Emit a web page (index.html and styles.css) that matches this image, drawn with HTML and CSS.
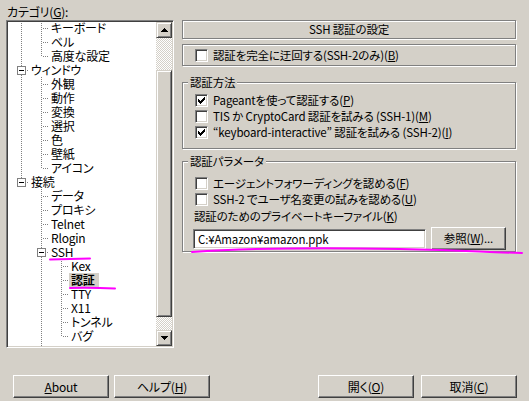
FILE: index.html
```html
<!DOCTYPE html>
<html lang="ja">
<head>
<meta charset="utf-8">
<title>PuTTY 設定</title>
<link rel="stylesheet" href="styles.css">
</head>
<body>
<div class="dialog">
  <div class="main">
    <div class="left">
      <div class="cat-label">カテゴリ(<u>G</u>):</div>
      <div class="tree">
        <div class="tree-list">
          <div class="rows">
            <div class="row"><span class="g pipe"></span><span class="g tee"></span><span class="lbl">キーボード</span></div>
            <div class="row"><span class="g pipe"></span><span class="g tee"></span><span class="lbl">ベル</span></div>
            <div class="row"><span class="g pipe"></span><span class="g elbow"></span><span class="lbl">高度な設定</span></div>
            <div class="row"><span class="g tee"><span class="exp"></span></span><span class="lbl">ウィンドウ</span></div>
            <div class="row"><span class="g pipe"></span><span class="g tee"></span><span class="lbl">外観</span></div>
            <div class="row"><span class="g pipe"></span><span class="g tee"></span><span class="lbl">動作</span></div>
            <div class="row"><span class="g pipe"></span><span class="g tee"></span><span class="lbl">変換</span></div>
            <div class="row"><span class="g pipe"></span><span class="g tee"></span><span class="lbl">選択</span></div>
            <div class="row"><span class="g pipe"></span><span class="g tee"></span><span class="lbl">色</span></div>
            <div class="row"><span class="g pipe"></span><span class="g tee"></span><span class="lbl">壁紙</span></div>
            <div class="row"><span class="g pipe"></span><span class="g elbow"></span><span class="lbl">アイコン</span></div>
            <div class="row"><span class="g elbow"><span class="exp"></span></span><span class="lbl">接続</span></div>
            <div class="row"><span class="g"></span><span class="g tee"></span><span class="lbl">データ</span></div>
            <div class="row"><span class="g"></span><span class="g tee"></span><span class="lbl">プロキシ</span></div>
            <div class="row"><span class="g"></span><span class="g tee"></span><span class="lbl">Telnet</span></div>
            <div class="row"><span class="g"></span><span class="g tee"></span><span class="lbl">Rlogin</span></div>
            <div class="row"><span class="g"></span><span class="g tee"><span class="exp"></span></span><span class="lbl">SSH</span></div>
            <div class="row"><span class="g"></span><span class="g pipe"></span><span class="g tee"></span><span class="lbl">Kex</span></div>
            <div class="row"><span class="g"></span><span class="g pipe"></span><span class="g tee"></span><span class="lbl sel">認証</span></div>
            <div class="row"><span class="g"></span><span class="g pipe"></span><span class="g tee"></span><span class="lbl">TTY</span></div>
            <div class="row"><span class="g"></span><span class="g pipe"></span><span class="g tee"></span><span class="lbl">X11</span></div>
            <div class="row"><span class="g"></span><span class="g pipe"></span><span class="g tee"></span><span class="lbl">トンネル</span></div>
            <div class="row"><span class="g"></span><span class="g pipe"></span><span class="g elbow"></span><span class="lbl">バグ</span></div>
            <div class="row"><span class="g"></span><span class="g tee"></span></div>
          </div>
        </div>
        <div class="vscroll">
          <div class="sb-btn"><svg width="7" height="4" viewBox="0 0 7 4" shape-rendering="crispEdges"><path d="M3 0h1v1H3zM2 1h3v1H2zM1 2h5v1H1zM0 3h7v1H0z" fill="#000"/></svg></div>
          <div class="track track-top"></div>
          <div class="thumb"></div>
          <div class="track track-bottom"></div>
          <div class="sb-btn"><svg width="7" height="4" viewBox="0 0 7 4" shape-rendering="crispEdges"><path d="M0 0h7v1H0zM1 1h5v1H1zM2 2h3v1H2zM3 3h1v1H3z" fill="#000"/></svg></div>
        </div>
      </div>
    </div>

    <div class="right">
      <div class="etched title">SSH 認証の設定</div>
      <div class="etched bypass">
        <div class="cb-row"><span class="cb"></span><span>認証を完全に迂回する(SSH-2のみ)(<u>B</u>)</span></div>
      </div>
      <div class="etched group g1">
        <div class="group-title">認証方法</div>
        <div class="group-body">
          <div class="cb-row"><span class="cb"><svg width="11" height="11" viewBox="1 1 11 11" shape-rendering="crispEdges"><path d="M3 5h1v3H3zM4 6h1v3H4zM5 7h1v3H5zM6 6h1v3H6zM7 5h1v3H7zM8 4h1v3H8zM9 3h1v3H9z" fill="#000"/></svg></span><span>Pageantを使って認証する(<u>P</u>)</span></div>
          <div class="cb-row"><span class="cb"></span><span>TIS か CryptoCard 認証を試みる (SSH-1)(<u>M</u>)</span></div>
          <div class="cb-row"><span class="cb"><svg width="11" height="11" viewBox="1 1 11 11" shape-rendering="crispEdges"><path d="M3 5h1v3H3zM4 6h1v3H4zM5 7h1v3H5zM6 6h1v3H6zM7 5h1v3H7zM8 4h1v3H8zM9 3h1v3H9z" fill="#000"/></svg></span><span>“keyboard-interactive” 認証を試みる (SSH-2)(<u>I</u>)</span></div>
        </div>
      </div>
      <div class="etched group g2">
        <div class="group-title">認証パラメータ</div>
        <div class="group-body">
          <div class="cb-row"><span class="cb"></span><span>エージェントフォワーディングを認める(<u>F</u>)</span></div>
          <div class="cb-row"><span class="cb"></span><span>SSH-2 でユーザ名変更の試みを認める(<u>U</u>)</span></div>
          <div class="file-label">認証のためのプライベートキーファイル(<u>K</u>)</div>
          <div class="file-row">
            <input class="textbox" type="text" value="C:¥Amazon¥amazon.ppk" readonly>
            <button class="btn browse" type="button">参照(<u>W</u>)...</button>
          </div>
        </div>
      </div>
    </div>
  </div>

  <div class="buttons">
    <button class="btn wide" type="button"><u>A</u>bout</button>
    <button class="btn wide help" type="button">ヘルプ(<u>H</u>)</button>
    <button class="btn wide open" type="button">開く(<u>O</u>)</button>
    <button class="btn wide cancel" type="button">取消(<u>C</u>)</button>
  </div>
</div>

<svg class="marks" width="529" height="401" viewBox="0 0 529 401">
  <g fill="none" stroke="#ff00ff" stroke-width="2" stroke-linecap="round">
    <path d="M50 259.5 Q70 259 90 258.5"/>
    <path d="M70 288 Q92 287.5 115 288.5"/>
    <path d="M192 252 C250 248 330 247.5 400 249 S480 252 522 253"/>
  </g>
</svg>
</body>
</html>
```

FILE: styles.css
```css
html, body {
  margin: 0;
  padding: 0;
}

body {
  width: 529px;
  height: 401px;
  overflow: hidden;
  position: relative;
  background: #d4d0c8;
  color: #000;
  font-family: "Noto Sans CJK JP", "Liberation Sans", sans-serif;
  font-size: 12px;
  font-feature-settings: "palt" 1;
  letter-spacing: -0.2px;
}

u {
  text-decoration: underline;
  text-underline-offset: 1px;
}

.main {
  display: flex;
  padding-top: 4px;
}

/* ---------- left column ---------- */
.left {
  margin-left: 6px;
  width: 168px;
}

.cat-label {
  height: 16px;
  line-height: 16px;
  padding-left: 1px;
}

.tree {
  box-sizing: border-box;
  height: 328px;
  border: 1px solid;
  border-color: #808080 #fff #fff #808080;
  box-shadow: inset 1px 1px #404040, inset -1px -1px #d4d0c8;
  padding: 1px;
  display: flex;
  background: #fff;
}

.tree-list {
  flex: 1;
  overflow: hidden;
  background: #fff;
}

.rows {
  margin-top: -1px;
}

.row {
  display: flex;
  height: 14px;
  line-height: 14px;
  white-space: nowrap;
}

.g {
  display: block;
  flex: none;
  width: 20px;
  height: 14px;
  background-repeat: no-repeat;
}

.pipe {
  background-image: repeating-linear-gradient(to bottom, #808080 0 1px, transparent 1px 2px);
  background-position: 13px 0;
  background-size: 1px 14px;
}

.tee {
  background-image:
    repeating-linear-gradient(to right, #808080 0 1px, transparent 1px 2px),
    repeating-linear-gradient(to bottom, #808080 0 1px, transparent 1px 2px);
  background-position: 15px 7px, 13px 0;
  background-size: 5px 1px, 1px 14px;
}

.elbow {
  background-image:
    repeating-linear-gradient(to right, #808080 0 1px, transparent 1px 2px),
    repeating-linear-gradient(to bottom, #808080 0 1px, transparent 1px 2px);
  background-position: 15px 7px, 13px 0;
  background-size: 5px 1px, 1px 8px;
}

.exp {
  display: block;
  box-sizing: border-box;
  width: 9px;
  height: 9px;
  margin: 3px 0 0 9px;
  border: 1px solid #808080;
  background: #fff linear-gradient(#000, #000) center / 5px 1px no-repeat;
}

.lbl {
  margin-left: 1px;
  padding: 0 2px;
}

.lbl.sel {
  background: #d4d0c8;
  font-weight: bold;
  padding: 0 4px 0 2px;
}

.vscroll {
  width: 16px;
  flex: none;
  display: flex;
  flex-direction: column;
}

.sb-btn,
.thumb {
  box-sizing: border-box;
  background: #d4d0c8;
  border: 1px solid;
  border-color: #d4d0c8 #404040 #404040 #d4d0c8;
  box-shadow: inset 1px 1px #fff, inset -1px -1px #808080;
}

.sb-btn {
  height: 16px;
  display: flex;
  align-items: center;
  justify-content: center;
}

.sb-btn svg {
  display: block;
}

.track {
  background: conic-gradient(#fff 25%, #d4d0c8 0 50%, #fff 0 75%, #d4d0c8 0) 0 0 / 2px 2px;
}

.track-top {
  height: 32px;
}

.thumb {
  height: 247px;
}

.track-bottom {
  flex: 1;
}

/* ---------- right column ---------- */
.right {
  margin-left: 8px;
  margin-top: 16px;
  width: 334px;
  font-size: 11.5px;
  letter-spacing: -0.15px;
}

.etched {
  box-sizing: border-box;
  border: 1px solid #808080;
  box-shadow: inset 1px 1px #fff, 1px 1px #fff;
}

.title {
  height: 19px;
  line-height: 17px;
  text-align: center;
}

.bypass {
  margin-top: 5px;
  height: 22px;
  padding-left: 12px;
  display: flex;
  align-items: center;
}

.bypass .cb {
  margin-left: 0;
}

.group-title {
  width: fit-content;
  margin: -8px 0 0 5px;
  padding: 0 2px;
  line-height: 14px;
  background: #d4d0c8;
}

.g1 {
  margin-top: 16px;
}

.g1 .group-body {
  padding: 3px 0 8px 10px;
}

.g2 {
  margin-top: 12px;
}

.g2 .group-body {
  padding: 7px 0 1px 10px;
}

.cb-row {
  display: flex;
  align-items: center;
  height: 16px;
  white-space: nowrap;
}

.cb {
  flex: none;
  box-sizing: border-box;
  width: 13px;
  height: 13px;
  margin: 0 5px 0 2px;
  border: 1px solid;
  border-color: #808080 #fff #fff #808080;
  box-shadow: inset 1px 1px #404040, inset -1px -1px #d4d0c8;
  background: #fff;
}

.cb svg {
  display: block;
}

.file-label {
  height: 16px;
  line-height: 16px;
  margin-top: 1px;
  padding-left: 1px;
  white-space: nowrap;
}

.file-row {
  display: flex;
  align-items: center;
  gap: 5px;
  height: 23px;
  margin-top: 3px;
}

.textbox {
  box-sizing: border-box;
  width: 233px;
  height: 20px;
  margin: 0;
  padding: 0 4px;
  border: 1px solid;
  border-color: #808080 #fff #fff #808080;
  box-shadow: inset 1px 1px #404040, inset -1px -1px #d4d0c8;
  background: #fff;
  color: #000;
  font: inherit;
  letter-spacing: inherit;
  outline: none;
}

.btn {
  box-sizing: border-box;
  height: 23px;
  margin: 0;
  padding: 0;
  border: 1px solid;
  border-color: #fff #404040 #404040 #fff;
  box-shadow: inset -1px -1px #808080;
  background: #d4d0c8;
  color: #000;
  font: inherit;
  letter-spacing: inherit;
  line-height: 21px;
}

.browse {
  width: 75px;
}

/* ---------- bottom buttons ---------- */
.buttons {
  display: flex;
  margin-top: 27px;
  padding: 0 12px 0 13px;
}

.btn.wide {
  width: 96px;
}

.help {
  margin-left: 5px;
}

.open {
  margin-left: auto;
}

.cancel {
  margin-left: 7px;
}

.marks {
  position: absolute;
  left: 0;
  top: 0;
  pointer-events: none;
}
```
